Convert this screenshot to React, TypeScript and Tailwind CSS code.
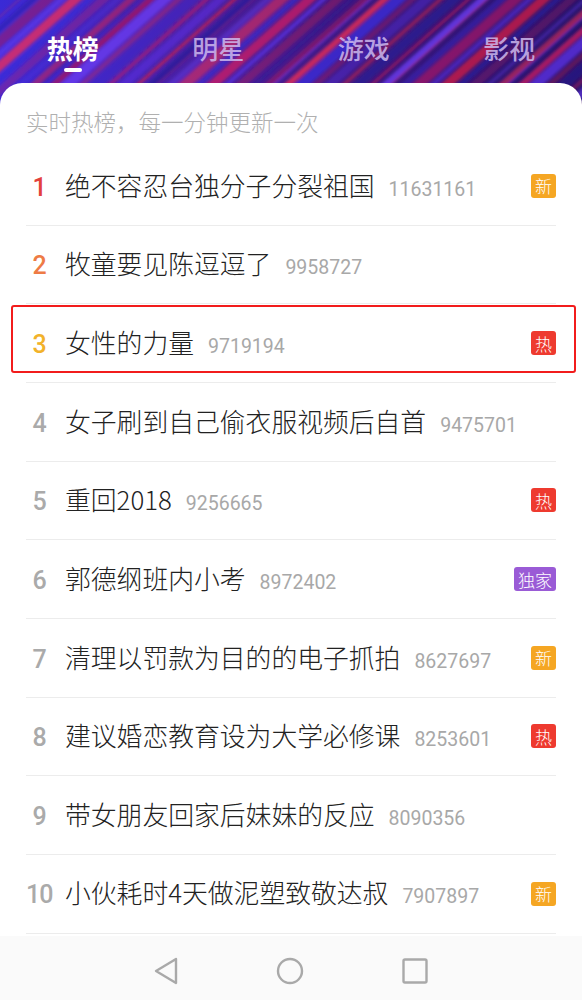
import React from "react";

type Tag = "新" | "热" | "独家" | null;

interface HotItem {
  rank: number;
  title: string;
  count: string;
  tag: Tag;
}

const items: HotItem[] = [
  { rank: 1, title: "绝不容忍台独分子分裂祖国", count: "11631161", tag: "新" },
  { rank: 2, title: "牧童要见陈逗逗了", count: "9958727", tag: null },
  { rank: 3, title: "女性的力量", count: "9719194", tag: "热" },
  { rank: 4, title: "女子刷到自己偷衣服视频后自首", count: "9475701", tag: null },
  { rank: 5, title: "重回2018", count: "9256665", tag: "热" },
  { rank: 6, title: "郭德纲班内小考", count: "8972402", tag: "独家" },
  { rank: 7, title: "清理以罚款为目的的电子抓拍", count: "8627697", tag: "新" },
  { rank: 8, title: "建议婚恋教育设为大学必修课", count: "8253601", tag: "热" },
  { rank: 9, title: "带女朋友回家后妹妹的反应", count: "8090356", tag: null },
  { rank: 10, title: "小伙耗时4天做泥塑致敬达叔", count: "7907897", tag: "新" },
];

const tabs = ["热榜", "明星", "游戏", "影视"];

const rankColor = (rank: number) => {
  if (rank === 1) return "text-[#e3413c]";
  if (rank === 2) return "text-[#ee7b45]";
  if (rank === 3) return "text-[#f2b22a]";
  return "text-[#aaaaaa]";
};

const tagClass: Record<string, string> = {
  新: "bg-[#f5a623] w-[25px]",
  热: "bg-[#ee3a2f] w-[25px]",
  独家: "bg-[#9a5bd6] w-[42px]",
};

// 顶部的彩色条纹背景
const streaks = Array.from({ length: 60 }, (_, i) => {
  const palette = ["#e0203f", "#3b2bd8", "#b0155a", "#5a2ee0", "#ff3050", "#2a1a9a", "#d81b60", "#6a3cf0"];
  const x = -140 + i * 13 + ((i * 37) % 9);
  const w = 2 + ((i * 13) % 9);
  return { x, w, color: palette[(i * 5) % palette.length], op: 0.3 + ((i * 7) % 6) / 10 };
});

const HeaderBg: React.FC = () => (
  <svg className="absolute left-0 top-0 h-[130px] w-full" viewBox="0 0 582 130" preserveAspectRatio="none">
    <defs>
      <linearGradient id="base" x1="0" y1="0" x2="1" y2="0">
        <stop offset="0" stopColor="#3a2ad6" />
        <stop offset="0.35" stopColor="#4a1f9e" />
        <stop offset="0.6" stopColor="#3a1780" />
        <stop offset="1" stopColor="#26136a" />
      </linearGradient>
      <filter id="soft">
        <feGaussianBlur stdDeviation="1.6" />
      </filter>
    </defs>
    <rect width="582" height="130" fill="url(#base)" />
    <g filter="url(#soft)">
      {streaks.map((s, i) => (
        <line
          key={i}
          x1={s.x}
          y1={140}
          x2={s.x + 170}
          y2={-10}
          stroke={s.color}
          strokeWidth={s.w}
          strokeOpacity={s.op}
        />
      ))}
    </g>
  </svg>
);

const App: React.FC = () => {
  return (
    <div className="relative h-[1000px] w-[582px] overflow-hidden bg-white font-['Noto_Sans_CJK_SC',sans-serif]">
      <HeaderBg />

      {/* 标签栏 */}
      <div className="relative grid h-[83px] grid-cols-4">
        {tabs.map((t, i) => (
          <div key={t} className="flex flex-col items-center pt-[30px]">
            <span
              className={
                i === 0
                  ? "text-[26px] font-bold leading-[36px] text-white"
                  : "text-[26px] font-medium leading-[36px] text-[#cdb9ee]/85"
              }
            >
              {t}
            </span>
            {i === 0 && <span className="mt-[2px] h-[4px] w-[18px] rounded-full bg-white" />}
          </div>
        ))}
      </div>

      {/* 内容卡片 */}
      <div className="relative rounded-t-[22px] bg-white">
        <div className="flex h-[64px] items-center px-[26px] pt-[13px] text-[22.5px] font-light text-[#b0b0b0]">
          实时热榜，每一分钟更新一次
        </div>

        {items.map((item) => (
          <div key={item.rank} className="relative">
            {item.rank === 3 && (
              <div className="absolute left-[11px] right-[6px] top-[1px] bottom-[10px] rounded-[3px] border-2 border-[#f21c1c]" />
            )}
            <div className="mx-[26px] flex h-[78.67px] items-center border-b border-[#ececec]">
              <div className="flex items-baseline">
                <span
                  className={`w-[39px] text-center font-['Roboto',sans-serif] text-[25px] font-medium ${rankColor(item.rank)} ${
                    item.rank < 10 ? "pr-[12px]" : "pr-[14px] tracking-[-1px]"
                  }`}
                >
                  {item.rank}
                </span>
                <span className="text-[25.8px] font-light text-[#222]">{item.title}</span>
                <span className="ml-[14px] font-['Roboto',sans-serif] text-[19.5px] text-[#a8a8a8]">
                  {item.count}
                </span>
              </div>
              {item.tag && (
                <span
                  className={`ml-auto flex h-[24px] items-center justify-center rounded-[3px] text-[17px] font-light leading-none text-white ${tagClass[item.tag]}`}
                >
                  {item.tag}
                </span>
              )}
            </div>
          </div>
        ))}

        {/* 底部导航 */}
        <div className="mt-[2px] flex h-[70px] items-start justify-center gap-[97px] bg-[#fafafa] pt-[20px]">
          <svg width="26" height="30" viewBox="0 0 26 30" fill="none">
            <path d="M23 3 L3 15 L23 27 Z" stroke="#a9a9a9" strokeWidth="2.4" strokeLinejoin="round" />
          </svg>
          <svg width="28" height="30" viewBox="0 0 28 30" fill="none">
            <circle cx="14" cy="15" r="12" stroke="#a9a9a9" strokeWidth="2.4" />
          </svg>
          <svg width="28" height="30" viewBox="0 0 28 30" fill="none">
            <rect x="2.5" y="3.5" width="23" height="23" rx="1.5" stroke="#a9a9a9" strokeWidth="2.4" />
          </svg>
        </div>
      </div>
    </div>
  );
};

export default App;
